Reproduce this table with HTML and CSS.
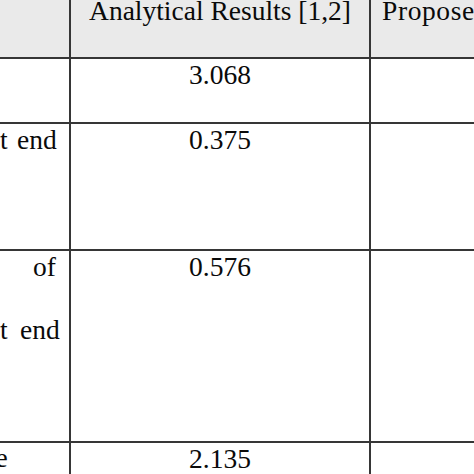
FILE: index.html
```html
<!DOCTYPE html>
<html>
<head>
<meta charset="utf-8">
<link rel="stylesheet" href="styles.css">
</head>
<body>
<div class="table">
  <div class="cell head c1"></div>
  <div class="cell head c2"><div class="hl">Analytical Results [1,2]</div></div>
  <div class="cell head c3"><div class="hl wide">Proposed Method</div></div>

  <div class="cell c1"></div>
  <div class="cell c2"><div class="ln">3.068</div></div>
  <div class="cell c3"></div>

  <div class="cell c1"><div class="ln ws1">t end</div></div>
  <div class="cell c2"><div class="ln">0.375</div></div>
  <div class="cell c3"></div>

  <div class="cell c1"><div class="ln">of</div><div class="ln ws2">t end</div></div>
  <div class="cell c2"><div class="ln">0.576</div></div>
  <div class="cell c3"></div>

  <div class="cell c1 last"><div class="ln tail">e</div></div>
  <div class="cell c2 last"><div class="ln">2.135</div></div>
  <div class="cell c3 last"></div>
</div>
</body>
</html>
```
FILE: styles.css
```css
html, body {
  margin: 0;
  padding: 0;
  background: #ffffff;
  overflow: hidden;
  width: 474px;
  height: 474px;
}

.table {
  display: grid;
  grid-template-columns: 71px 300px 260px;
  grid-template-rows: 59px 65px 127px 192px 80px;
  width: 631px;
  font-family: "Liberation Serif", "Times New Roman", serif;
  font-size: 27.5px;
  color: #0a0a0a;
}

.cell {
  box-sizing: border-box;
  border-bottom: 2px solid #363636;
  overflow: hidden;
  white-space: nowrap;
}

.cell.last {
  border-bottom: none;
}

.c1, .c2 {
  border-right: 2px solid #363636;
}

.head {
  background: #eaeaea;
}

.c1 {
  text-align: right;
  padding-right: 13px;
}

.c2 {
  text-align: center;
}

.c3 {
  text-align: left;
  padding-left: 11px;
}

.hl {
  line-height: 21px;
}

.wide {
  letter-spacing: 0.6px;
}

.ln {
  height: 63px;
  line-height: 32px;
}

.ws1 {
  word-spacing: 2.5px;
}

.ws2 {
  word-spacing: 5.5px;
}

.tail {
  text-align: left;
  text-indent: -4.5px;
  line-height: 30px;
}
```
